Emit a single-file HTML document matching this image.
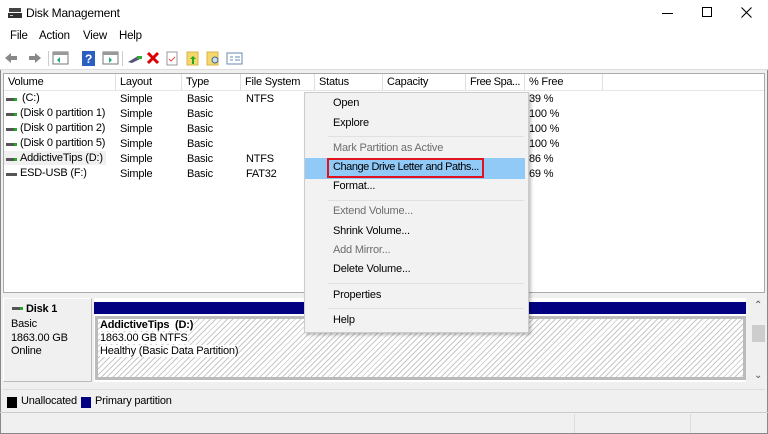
<!DOCTYPE html>
<html><head><style>
*{margin:0;padding:0;box-sizing:border-box}
body{width:768px;height:434px;overflow:hidden;background:#f0f0f0;font-family:"Liberation Sans",sans-serif;font-size:11px;letter-spacing:-0.2px;color:#000;position:relative}
.a{position:absolute;white-space:nowrap}
.hd{position:absolute;top:74px;height:17px;border-right:1px solid #e0e0e0;padding-left:4px;line-height:16px;background:#fff;overflow:hidden}
.ico{position:absolute;width:11px;height:3px;background:#555;border-right:3px solid #2a2}
.mi{position:absolute;left:333px}
.sep{position:absolute;left:328px;width:196px;height:1px;background:#e0e0e0}
</style></head><body>
<div class="a" style="left:0;top:0;width:768px;height:434px;border:1px solid #888;border-top:none"></div>
<div class="a" style="left:0;top:0;width:768px;height:28px;background:#fff"></div>
<svg class="a" style="left:8px;top:7px" width="14" height="12"><rect x="1" y="1" width="12" height="4" fill="#444"/><rect x="0" y="6" width="14" height="5" fill="#333"/><rect x="2" y="8" width="3" height="1" fill="#ccc"/></svg>
<div class="a" style="left:26px;top:6px;font-size:12px">Disk Management</div>
<div class="a" style="left:662px;top:13px;width:11px;height:1px;background:#000"></div>
<div class="a" style="left:702px;top:7px;width:10px;height:10px;border:1px solid #000"></div>
<svg class="a" style="left:741px;top:7px" width="11" height="11"><path d="M0.5 0.5L10.5 10.5M10.5 0.5L0.5 10.5" stroke="#000" stroke-width="1.1"/></svg>
<div class="a" style="left:0;top:28px;width:768px;height:18px;background:#fff"></div>
<div class="a" style="left:10px;top:30px;font-size:11.5px">File</div>
<div class="a" style="left:39px;top:30px;font-size:11.5px">Action</div>
<div class="a" style="left:83px;top:30px;font-size:11.5px">View</div>
<div class="a" style="left:119px;top:30px;font-size:11.5px">Help</div>
<div class="a" style="left:0;top:46px;width:768px;height:24px;background:#fff;border-bottom:1px solid #ddd"></div>
<svg class="a" style="left:4px;top:50px" width="240" height="16">
<path d="M1 8 L7 3 V6 H13 V10 H7 V13Z" fill="#888"/><path d="M37 8 L31 3 V6 H25 V10 H31 V13Z" fill="#888"/>
<rect x="44" y="1" width="1" height="15" fill="#ccc"/>
<rect x="49" y="2" width="15" height="12" fill="#fff" stroke="#777"/><rect x="49" y="2" width="15" height="3" fill="#999"/><path d="M56 7l-3 3 3 3z" fill="#2a7"/>
<rect x="78" y="1" width="13" height="15" fill="#2a5fc0"/><text x="81" y="13" fill="#fff" font-size="12" font-weight="bold" font-family="Liberation Sans">?</text>
<rect x="99" y="2" width="15" height="12" fill="#fff" stroke="#777"/><rect x="99" y="2" width="15" height="3" fill="#999"/><path d="M105 7l3 3-3 3z" fill="#2a7"/>
<rect x="118" y="1" width="1" height="15" fill="#ccc"/>
<path d="M124 12 L134 6 L138 8 L128 13Z" fill="#557"/><rect x="133" y="6" width="5" height="3" fill="#3a3"/>
<path d="M144 3 L154 13 M154 3 L144 13" stroke="#d00" stroke-width="3"/>
<rect x="163" y="2" width="10" height="13" fill="#fff" stroke="#999"/><path d="M165 9l2 2 4-4" stroke="#e44" fill="none"/>
<rect x="183" y="2" width="11" height="13" fill="#f5d76e" stroke="#d9b44a"/><path d="M188 14v-5h-2l3-3 3 3h-2v5z" fill="#2a2"/>
<rect x="203" y="2" width="11" height="13" fill="#f5d76e" stroke="#d9b44a"/><circle cx="211" cy="10" r="3" fill="#cde" stroke="#468"/>
<rect x="223" y="3" width="15" height="11" fill="#fff" stroke="#6a8ab0"/><path d="M226 7h3M231 7h5M226 10h3M231 10h5" stroke="#6a8ab0"/>
</svg>
<div class="a" style="left:3px;top:73px;width:762px;height:220px;background:#fff;border:1px solid #aaa"></div>
<div class="hd" style="left:4px;width:112px">Volume</div>
<div class="hd" style="left:116px;width:66px">Layout</div>
<div class="hd" style="left:182px;width:59px">Type</div>
<div class="hd" style="left:241px;width:74px">File System</div>
<div class="hd" style="left:315px;width:68px">Status</div>
<div class="hd" style="left:383px;width:83px">Capacity</div>
<div class="hd" style="left:466px;width:59px;letter-spacing:-0.4px">Free Spa...</div>
<div class="hd" style="left:525px;width:78px">% Free</div>
<div class="a" style="left:4px;top:90px;width:760px;height:1px;background:#e5e5e5"></div>
<div class="a" style="left:4px;top:151px;width:102px;height:14px;background:#f0f0f0"></div>
<div class="ico" style="left:6px;top:98px"></div><div class="ico" style="left:6px;top:113px"></div><div class="ico" style="left:6px;top:128px"></div><div class="ico" style="left:6px;top:143px"></div><div class="ico" style="left:6px;top:158px"></div><div class="ico" style="left:6px;top:173px;border-right-color:#555"></div>
<div class="a" style="left:22px;top:92px">(C:)</div>
<div class="a" style="left:20px;top:107px">(Disk 0 partition 1)</div>
<div class="a" style="left:20px;top:122px">(Disk 0 partition 2)</div>
<div class="a" style="left:20px;top:137px">(Disk 0 partition 5)</div>
<div class="a" style="left:20px;top:152px">AddictiveTips (D:)</div>
<div class="a" style="left:20px;top:167px">ESD-USB (F:)</div>
<div class="a" style="left:120px;top:92px;line-height:15px">Simple<br>Simple<br>Simple<br>Simple<br>Simple<br>Simple</div>
<div class="a" style="left:187px;top:92px;line-height:15px">Basic<br>Basic<br>Basic<br>Basic<br>Basic<br>Basic</div>
<div class="a" style="left:246px;top:92px;line-height:15px">NTFS<br><br><br><br>NTFS<br>FAT32</div>
<div class="a" style="left:529px;top:92px;line-height:15px">39 %<br>100 %<br>100 %<br>100 %<br>86 %<br>69 %</div>
<!-- bottom -->
<div class="a" style="left:3px;top:298px;width:89px;height:84px;background:#f0f0f0;border:1px solid #fff;border-right-color:#bbb;border-bottom-color:#bbb"></div>
<div class="a" style="left:12px;top:307px;width:11px;height:3px;background:#555;border-right:3px solid #2a2"></div>
<div class="a" style="left:26px;top:303px;font-weight:bold">Disk 1</div>
<div class="a" style="left:11px;top:318px;line-height:13.5px">Basic<br>1863.00 GB<br>Online</div>
<div class="a" style="left:94px;top:298px;width:652px;height:84px;background:#fff"></div>
<div class="a" style="left:94px;top:302px;width:652px;height:12px;background:#000080"></div>
<div class="a" style="left:95px;top:316px;width:651px;height:64px;border:3px solid #bbb;background:repeating-linear-gradient(135deg,#fff 0 3px,#c8c8c8 3px 4px)"></div>
<div class="a" style="left:100px;top:319px;font-weight:bold;background:#fff">AddictiveTips&nbsp; (D:)</div>
<div class="a" style="left:100px;top:332px;background:#fff">1863.00 GB NTFS</div>
<div class="a" style="left:100px;top:345px;background:#fff">Healthy (Basic Data Partition)</div>
<div class="a" style="left:750px;top:298px;width:17px;height:86px;background:#f0f0f0"></div>
<div class="a" style="left:754px;top:300px;font-size:10px;color:#555">⌃</div>
<div class="a" style="left:752px;top:325px;width:13px;height:17px;background:#cdcdcd"></div>
<div class="a" style="left:754px;top:370px;font-size:10px;color:#555">⌄</div>
<div class="a" style="left:3px;top:389px;width:762px;height:1px;background:#ddd"></div>
<div class="a" style="left:7px;top:397px;width:10px;height:11px;background:#000"></div>
<div class="a" style="left:21px;top:395px">Unallocated</div>
<div class="a" style="left:81px;top:397px;width:10px;height:11px;background:#000080"></div>
<div class="a" style="left:95px;top:395px">Primary partition</div>
<div class="a" style="left:0;top:412px;width:768px;height:1px;background:#ccc"></div>
<div class="a" style="left:574px;top:414px;width:1px;height:19px;background:#ddd"></div>
<div class="a" style="left:690px;top:414px;width:1px;height:19px;background:#ddd"></div>
<!-- context menu -->
<div class="a" style="left:304px;top:92px;width:225px;height:241px;background:#f2f2f2;border:1px solid #ccc;box-shadow:2px 2px 3px rgba(0,0,0,.25)"></div>
<div class="a" style="left:305px;top:158px;width:220px;height:21px;background:#91c9f7"></div>
<div class="a" style="left:327px;top:158px;width:157px;height:20px;border:2px solid #e0141e"></div>
<div class="mi" style="top:97px">Open</div>
<div class="mi" style="top:117px">Explore</div>
<div class="sep" style="top:136px"></div>
<div class="mi" style="top:142px;color:#6d6d6d">Mark Partition as Active</div>
<div class="mi" style="top:161px;letter-spacing:-0.45px">Change Drive Letter and Paths...</div>
<div class="mi" style="top:180px">Format...</div>
<div class="sep" style="top:200px"></div>
<div class="mi" style="top:205px;color:#6d6d6d">Extend Volume...</div>
<div class="mi" style="top:225px">Shrink Volume...</div>
<div class="mi" style="top:244px;color:#6d6d6d">Add Mirror...</div>
<div class="mi" style="top:263px">Delete Volume...</div>
<div class="sep" style="top:283px"></div>
<div class="mi" style="top:289px">Properties</div>
<div class="sep" style="top:308px"></div>
<div class="mi" style="top:314px">Help</div>
</body></html>
